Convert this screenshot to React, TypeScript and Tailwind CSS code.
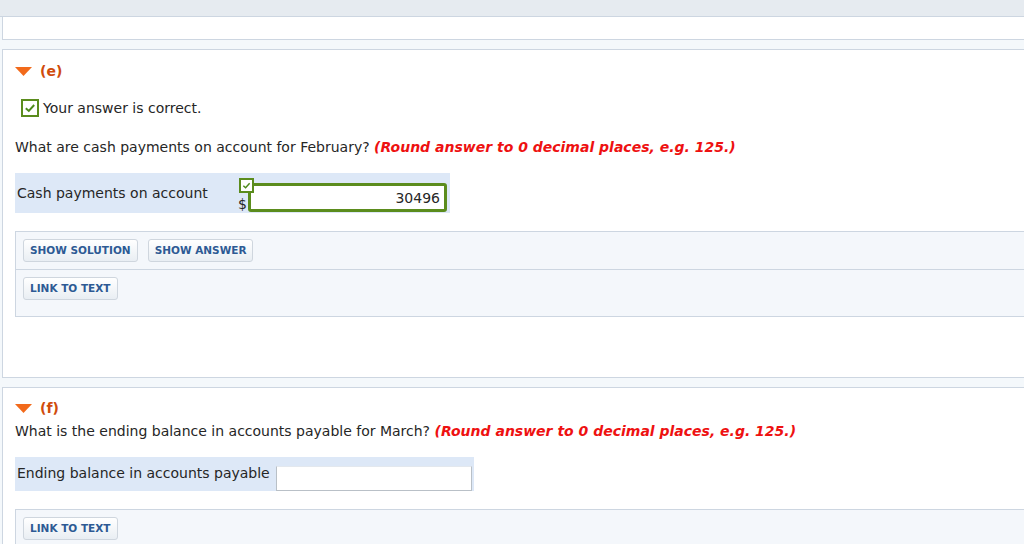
import React from 'react'

const font = { fontFamily: '"DejaVu Sans", Verdana, sans-serif' }

function Triangle() {
  return (
    <svg width="17" height="9" viewBox="0 0 17 9" className="shrink-0">
      <polygon points="0,0 17,0 8.5,9" fill="#f26a1b" />
    </svg>
  )
}

function Check({ size }: { size: number }) {
  return (
    <span
      className="inline-flex items-center justify-center border-2 border-[#5b8c1d] bg-white shrink-0"
      style={{ width: size, height: size }}
    >
      <svg width={size - 6} height={size - 6} viewBox="0 0 10 10">
        <path d="M1.5 5.2 L4 7.5 L8.5 2.5" stroke="#4d8a1a" strokeWidth="1.6" fill="none" />
      </svg>
    </span>
  )
}

function Btn({ children }: { children: React.ReactNode }) {
  return (
    <button className="h-[23px] px-[6px] rounded-[3px] border border-[#cfd6de] bg-gradient-to-b from-white to-[#e9eef3] text-[10.5px] leading-[21px] font-bold text-[#2d5a94]">
      {children}
    </button>
  )
}

export default function App() {
  return (
    <div className="w-[1024px] h-[544px] overflow-hidden bg-[#f4f8fb] text-[#262626] text-[14px] leading-[20px]" style={font}>
      <div className="h-[17px] bg-[#e6ebf0] border-b border-[#cdd6e1]" />
      <div className="ml-[2px] h-[23px] bg-white border-l border-b border-[#cdd6e1]" />

      <div className="mt-[9px] ml-[2px] h-[329px] bg-white border-l border-t border-b border-[#cdd6e1] pl-[12px]">
        <div className="flex items-center gap-[8px] pt-[11px] h-[31px]">
          <Triangle />
          <span className="font-bold text-[#d04c0c]">(e)</span>
        </div>
        <div className="flex items-center gap-[4px] mt-[18px] ml-[6px] h-[18px]">
          <Check size={18} />
          <span>Your answer is correct.</span>
        </div>
        <div className="mt-[20px] h-[20px]">
          What are cash payments on account for February?{' '}
          <span className="font-bold italic text-[#ee1111]">(Round answer to 0 decimal places, e.g. 125.)</span>
        </div>
        <div className="mt-[16px] w-[435px] h-[40px] bg-[#dde8f7] flex">
          <div className="pl-[2px] pt-[10px] w-[222px]">Cash payments on account</div>
          <div className="relative flex-1">
            <span className="absolute left-[1px] top-[21px]">$</span>
            <div className="absolute left-[11px] top-[10px] w-[199px] h-[29px] rounded-[3px] border-[3px] border-[#5b8c1d] bg-white flex items-center justify-end pr-[4px]">
              30496
            </div>
            <div className="absolute left-[2px] top-[2px] z-10">
              <Check size={15} />
            </div>
          </div>
        </div>
        <div className="mt-[18px] h-[86px] bg-[#f4f7fb] border-l border-t border-b border-[#cdd6e1]">
          <div className="h-[38px] border-b border-[#cdd6e1] flex items-start gap-[10px] pl-[7px] pt-[7px]">
            <Btn>SHOW SOLUTION</Btn>
            <Btn>SHOW ANSWER</Btn>
          </div>
          <div className="pl-[7px] pt-[7px]">
            <Btn>LINK TO TEXT</Btn>
          </div>
        </div>
      </div>

      <div className="mt-[9px] ml-[2px] h-[200px] bg-white border-l border-t border-[#cdd6e1] pl-[12px]">
        <div className="flex items-center gap-[8px] pt-[10px] h-[30px]">
          <Triangle />
          <span className="font-bold text-[#d04c0c]">(f)</span>
        </div>
        <div className="mt-[3px] h-[20px]">
          What is the ending balance in accounts payable for March?{' '}
          <span className="font-bold italic text-[#ee1111]">(Round answer to 0 decimal places, e.g. 125.)</span>
        </div>
        <div className="mt-[16px] w-[459px] h-[34px] bg-[#dde8f7] flex items-start">
          <div className="pl-[2px] pt-[6px] w-[261px]">Ending balance in accounts payable</div>
          <div className="w-[196px] h-[25px] mt-[9px] bg-white border border-[#b9c0c7] border-t-[#e3e8ee]" />
        </div>
        <div className="mt-[18px] h-[60px] bg-[#f4f7fb] border-l border-t border-[#cdd6e1] pl-[7px] pt-[7px]">
          <Btn>LINK TO TEXT</Btn>
        </div>
      </div>
    </div>
  )
}
